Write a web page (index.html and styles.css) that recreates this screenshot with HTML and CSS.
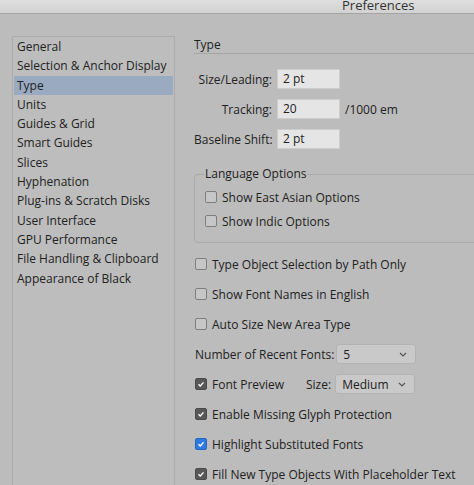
FILE: index.html
```html
<!DOCTYPE html>
<html>
<head>
<meta charset="utf-8">
<title>Preferences</title>
<link rel="stylesheet" href="styles.css">
</head>
<body>
<div class="window">
  <div class="titlebar"><span class="title">Preferences</span></div>
  <div class="main">
    <ul class="nav">
      <li>General</li>
      <li>Selection &amp; Anchor Display</li>
      <li class="selected">Type</li>
      <li>Units</li>
      <li>Guides &amp; Grid</li>
      <li>Smart Guides</li>
      <li>Slices</li>
      <li>Hyphenation</li>
      <li>Plug-ins &amp; Scratch Disks</li>
      <li>User Interface</li>
      <li>GPU Performance</li>
      <li>File Handling &amp; Clipboard</li>
      <li>Appearance of Black</li>
    </ul>
    <div class="panel">
      <div class="heading">Type</div>
      <div class="fields">
        <label class="flabel">Size/Leading:</label>
        <div class="fval"><span class="input">2 pt</span></div>
        <label class="flabel">Tracking:</label>
        <div class="fval"><span class="input">20</span><span class="unit">/1000 em</span></div>
        <label class="flabel">Baseline Shift:</label>
        <div class="fval"><span class="input">2 pt</span></div>
      </div>
      <fieldset class="group">
        <legend>Language Options</legend>
        <div class="grow"><span class="cb"></span>Show East Asian Options</div>
        <div class="grow"><span class="cb"></span>Show Indic Options</div>
      </fieldset>
      <div class="rows">
        <div class="row"><span class="cb"></span>Type Object Selection by Path Only</div>
        <div class="row"><span class="cb"></span>Show Font Names in English</div>
        <div class="row"><span class="cb"></span>Auto Size New Area Type</div>
        <div class="row">Number of Recent Fonts:<span class="select recent">5<svg class="chev" viewBox="0 0 8 5" width="8" height="5"><path d="M1 1l3 3 3-3" fill="none" stroke="#555" stroke-width="1.2"/></svg></span></div>
        <div class="row"><span class="cb on"><svg viewBox="0 0 12 12" width="12" height="12"><path d="M3 6.2l2.1 2.1L9 4" fill="none" stroke="#fff" stroke-width="1.6"/></svg></span><span class="fp">Font Preview</span><span class="sizelbl">Size:</span><span class="select size">Medium<svg class="chev" viewBox="0 0 8 5" width="8" height="5"><path d="M1 1l3 3 3-3" fill="none" stroke="#555" stroke-width="1.2"/></svg></span></div>
        <div class="row"><span class="cb on"><svg viewBox="0 0 12 12" width="12" height="12"><path d="M3 6.2l2.1 2.1L9 4" fill="none" stroke="#fff" stroke-width="1.6"/></svg></span>Enable Missing Glyph Protection</div>
        <div class="row"><span class="cb blue"><svg viewBox="0 0 12 12" width="12" height="12"><path d="M3 6.2l2.1 2.1L9 4" fill="none" stroke="#fff" stroke-width="1.6"/></svg></span>Highlight Substituted Fonts</div>
        <div class="row"><span class="cb on"><svg viewBox="0 0 12 12" width="12" height="12"><path d="M3 6.2l2.1 2.1L9 4" fill="none" stroke="#fff" stroke-width="1.6"/></svg></span>Fill New Type Objects With Placeholder Text</div>
      </div>
    </div>
  </div>
</div>
</body>
</html>
```
FILE: styles.css
```css
html, body {
  margin: 0;
  padding: 0;
  background: #bcbcbc;
  overflow: hidden;
}
.window {
  width: 474px;
  height: 485px;
  overflow: hidden;
  font-family: "Open Sans", "Liberation Sans", sans-serif;
  font-size: 12px;
  color: #222;
}
.titlebar {
  height: 13px;
  background: linear-gradient(#dedede, #d2d2d2);
  border-bottom: 1px solid #a4a4a4;
  overflow: hidden;
  display: flex;
  align-items: flex-end;
  padding-left: 342px;
}
.title {
  font-size: 13px;
  line-height: 17px;
  color: #333;
  margin-bottom: -1px;
}
.main {
  display: flex;
  padding-top: 22px;
  align-items: flex-start;
}
.nav {
  list-style: none;
  margin: 0 0 0 12px;
  padding: 0 1px;
  width: 159px;
  height: 480px;
  border: 1px solid #acacac;
  background: #bdbdbd;
}
.nav li {
  height: 19.3px;
  line-height: 19.3px;
  padding-left: 3px;
  white-space: nowrap;
}
.nav li.selected {
  background: #9aaac1;
}
.panel {
  margin-left: 19px;
  flex: 1;
}
.heading {
  height: 16px;
  line-height: 16px;
  border-bottom: 1px solid #a6a6a6;
  margin-top: 1px;
}
.fields {
  display: grid;
  grid-template-columns: 78px auto;
  column-gap: 5px;
  row-gap: 10px;
  margin-top: 15px;
  align-items: center;
}
.flabel {
  text-align: right;
  white-space: nowrap;
}
.fval {
  display: flex;
  align-items: center;
}
.input {
  box-sizing: border-box;
  width: 63px;
  height: 20px;
  line-height: 18px;
  padding-left: 5px;
  background: #e5e5e5;
  border: 1px solid #cdcdcd;
  color: #222;
}
.unit {
  margin-left: 5px;
}
.group {
  margin: 17px -10px 0 0;
  padding: 3px 0 9px 9px;
  border: 1px solid #aaaaaa;
  border-radius: 4px;
}
.group legend {
  padding: 0 1px;
  line-height: 16px;
}
.grow {
  height: 24px;
  display: flex;
  align-items: center;
  white-space: nowrap;
}
.grow .cb { margin-left: 1px; margin-right: 5px; }
.rows {
  margin-top: 6px;
}
.row {
  height: 30px;
  display: flex;
  align-items: center;
  white-space: nowrap;
  padding-left: 1px;
}
.cb {
  box-sizing: border-box;
  width: 12px;
  height: 12px;
  border: 1px solid #7e7e7e;
  border-radius: 2px;
  background: #c6c6c6;
  margin-right: 5px;
  flex: none;
  display: flex;
  align-items: center;
  justify-content: center;
}
.cb svg { display: block; }
.cb.on {
  background: #585858;
  border-color: #4a4a4a;
}
.cb.blue {
  background: #2f7ae0;
  border-color: #2766c0;
}
.select {
  box-sizing: border-box;
  height: 20px;
  display: flex;
  align-items: center;
  justify-content: space-between;
  padding: 0 8px 0 6px;
  background: #c9c9c9;
  border: 1px solid #b3b3b3;
  border-radius: 3px;
  color: #222;
}
.select.recent {
  width: 80px;
  margin-left: 2px;
}
.select.size {
  width: 80px;
  margin-left: 4px;
}
.fp { width: 94px; }
.chev { display: block; }
```
